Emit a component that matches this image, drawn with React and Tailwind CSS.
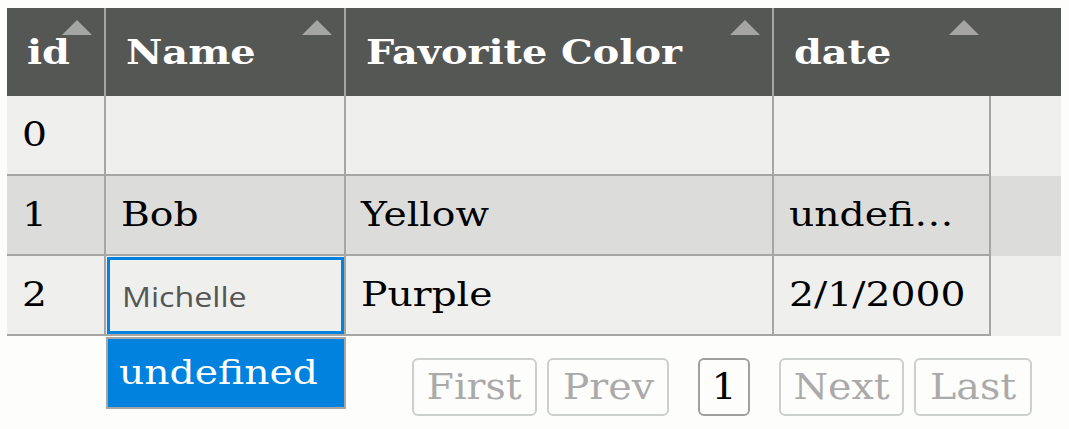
import React from 'react'

const serif = { fontFamily: '"DejaVu Serif", serif' }

const cols = [
  { key: 'id', label: 'id', w: 'w-[99px]' },
  { key: 'name', label: 'Name', w: 'w-[240px]' },
  { key: 'color', label: 'Favorite Color', w: 'w-[428px]' },
  { key: 'date', label: 'date', w: 'w-[217px]' },
]

const rows = [
  { id: '0', name: '', color: '', date: '' },
  { id: '1', name: 'Bob', color: 'Yellow', date: 'undefi…' },
  { id: '2', name: 'Michelle', color: 'Purple', date: '2/1/2000', editing: true },
]

// the reference glyphs are drawn wider than the font's own proportions
function Wide({ children, className = 'scale-x-[1.19]' }){
  return <span className={`inline-block origin-left whitespace-nowrap ${className}`}>{children}</span>
}

function SortArrow(){
  return (
    <svg className="absolute right-[12px] top-[12px]" width="30" height="15" viewBox="0 0 30 15">
      <polygon points="15,0 30,15 0,15" fill="#a5a6a3" />
    </svg>
  )
}

function Cell({ w, children }){
  return (
    <div className={`${w} h-full shrink-0 border-r-2 border-b-2 border-[#a5a6a3] flex items-center pl-[15px] overflow-hidden text-[33px] text-black`}>
      <Wide>{children}</Wide>
    </div>
  )
}

function PageBtn({ w, children, current }){
  return (
    <button className={`${w} h-[58px] shrink-0 rounded-md border-2 flex items-center justify-center text-[35px] ${current ? 'border-[#a0a0a0] text-black' : 'border-[#ccd0cd] text-[#aaaaaa]'}`}>
      <span className="inline-block origin-center scale-x-[1.13]">{children}</span>
    </button>
  )
}

export default function App(){
  return (
    <div className="min-h-screen w-[1069px] h-[429px] bg-[#fdfdfc] pt-[8px] pl-[7px] overflow-hidden" style={serif}>
      <div className="w-[1054px]">
        {/* header */}
        <div className="flex h-[88px] bg-[#555754]">
          {cols.map((c, i) => (
            <div key={c.key} className={`${c.w} relative shrink-0 flex items-center pl-[20px] pt-[1px] text-[34px] font-bold text-white ${i < 3 ? 'border-r-2 border-[#a5a6a3]' : ''}`}>
              <Wide className="scale-x-[1.17]">{c.label}</Wide>
              <SortArrow />
            </div>
          ))}
          <div className="flex-1" />
        </div>

        {/* body */}
        {rows.map((r, i) => {
          const bg = i === 1 ? 'bg-[#dcdddb]' : 'bg-[#eff0ee]'
          return (
            <div key={r.id} className={`flex h-[80px] ${bg}`}>
              <Cell w="w-[99px]">{r.id}</Cell>
              {r.editing ? (
                <div className="w-[240px] h-full shrink-0 border-r-2 border-b-2 border-[#a5a6a3] relative">
                  <div className="absolute left-[1px] top-[1px] right-0 bottom-0 border-[3px] border-[#0082de] bg-[#eff0ee] flex items-center pl-[12px] text-[28px] text-[#555754]" style={{ fontFamily: '"Open Sans", sans-serif' }}>
                    <Wide className="scale-x-[1.15]">{r.name}</Wide>
                  </div>
                  <div className="absolute left-0 top-[81px] w-[240px] h-[72px] border-2 border-[#a5a6a3] bg-[#0082de] text-white text-[33px] flex items-center pl-[11px] z-10">
                    <Wide>undefined</Wide>
                  </div>
                </div>
              ) : (
                <Cell w="w-[240px]">{r.name}</Cell>
              )}
              <Cell w="w-[428px]">{r.color}</Cell>
              <Cell w="w-[217px]">{r.date}</Cell>
              <div className="flex-1" />
            </div>
          )
        })}

        {/* pagination */}
        <div className="flex justify-end items-center pr-[29px] pt-[22px]">
          <div className="flex items-center gap-[10px]">
            <PageBtn w="w-[125px]">First</PageBtn>
            <PageBtn w="w-[122px]">Prev</PageBtn>
          </div>
          <div className="mx-[29px]">
            <PageBtn w="w-[52px]" current>1</PageBtn>
          </div>
          <div className="flex items-center gap-[10px]">
            <PageBtn w="w-[125px]">Next</PageBtn>
            <PageBtn w="w-[118px]">Last</PageBtn>
          </div>
        </div>
      </div>
    </div>
  )
}
